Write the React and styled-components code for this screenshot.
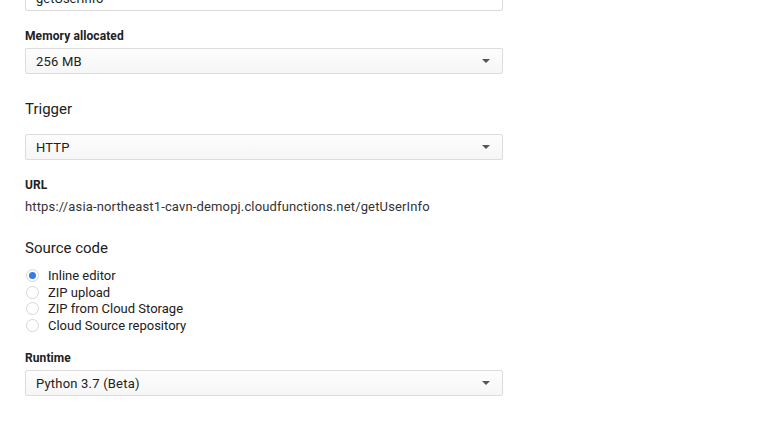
import React from "react";
import styled, { createGlobalStyle } from "styled-components";

const Global = createGlobalStyle`
  html, body { margin: 0; padding: 0; background: #fff; }
  body {
    font-family: Roboto, "Liberation Sans", Arial, sans-serif;
    color: #212121;
    overflow: hidden;
  }
`;

const Page = styled.div`
  width: 478px;
  padding-left: 25px;
  display: flex;
  flex-direction: column;
  margin-top: -15px;
`;

const TextInput = styled.div`
  box-sizing: border-box;
  height: 26px;
  border: 1px solid #dadada;
  border-radius: 2px;
  background: #fff;
  padding: 0 10px;
  display: flex;
  align-items: center;
  font-size: 13px;
  color: #212121;
`;

const Label = styled.div`
  margin-top: ${(p) => p.$mt}px;
  font-size: 12px;
  font-weight: 700;
  line-height: 14px;
  letter-spacing: 0.1px;
  color: #212121;
`;

const Heading = styled.div`
  margin-top: ${(p) => p.$mt}px;
  font-size: 15px;
  line-height: 20px;
  color: #212121;
`;

const SelectBox = styled.div`
  box-sizing: border-box;
  margin-top: ${(p) => p.$mt}px;
  height: 26px;
  border: 1px solid #dcdcdc;
  border-radius: 2px;
  background: linear-gradient(#fdfdfd, #f6f6f6);
  padding: 0 11px 0 10px;
  display: flex;
  align-items: center;
  justify-content: space-between;
  font-size: 13px;
  letter-spacing: 0.2px;
  color: #212121;
`;

const Arrow = styled.span`
  width: 0;
  height: 0;
  border-left: 4px solid transparent;
  border-right: 4px solid transparent;
  border-top: 4px solid #555;
  margin-right: 1px;
`;

const UrlText = styled.div`
  margin-top: 7px;
  font-size: 13px;
  line-height: 16px;
  letter-spacing: 0.15px;
  color: #333;
`;

const RadioList = styled.div`
  margin-top: 9px;
  display: flex;
  flex-direction: column;
  margin-left: 1px;
`;

const RadioRow = styled.label`
  display: flex;
  align-items: center;
  gap: 9px;
  height: 16.8px;
  font-size: 13px;
  color: #212121;
`;

const RadioDot = styled.span`
  box-sizing: border-box;
  width: 13px;
  height: 13px;
  border-radius: 50%;
  border: 1px solid #d6d6d6;
  background: #fff;
  display: flex;
  align-items: center;
  justify-content: center;
  &::after {
    content: "";
    width: 7px;
    height: 7px;
    border-radius: 50%;
    background: ${(p) => (p.$on ? "#3b78e7" : "transparent")};
  }
`;

function Select({ value, mt }) {
  return (
    <SelectBox $mt={mt}>
      <span>{value}</span>
      <Arrow />
    </SelectBox>
  );
}

const sources = [
  "Inline editor",
  "ZIP upload",
  "ZIP from Cloud Storage",
  "Cloud Source repository",
];

export default function App() {
  return (
    <>
      <Global />
      <Page>
        <TextInput>getUserInfo</TextInput>

        <Label $mt={18}>Memory allocated</Label>
        <Select mt={5} value="256 MB" />

        <Heading $mt={25}>Trigger</Heading>
        <Select mt={15} value="HTTP" />

        <Label $mt={18}>URL</Label>
        <UrlText>https://asia-northeast1-cavn-demopj.cloudfunctions.net/getUserInfo</UrlText>

        <Heading $mt={23}>Source code</Heading>
        <RadioList>
          {sources.map((s, i) => (
            <RadioRow key={s}>
              <RadioDot $on={i === 0} />
              {s}
            </RadioRow>
          ))}
        </RadioList>

        <Label $mt={17}>Runtime</Label>
        <Select mt={5} value="Python 3.7 (Beta)" />
      </Page>
    </>
  );
}
